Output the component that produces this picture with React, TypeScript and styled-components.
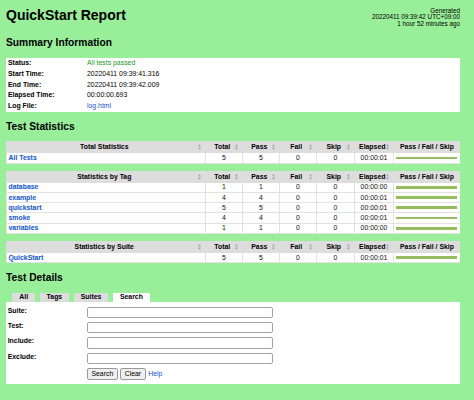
import React from 'react';
import styled, { createGlobalStyle } from 'styled-components';

const GlobalStyle = createGlobalStyle`
  html, body { margin: 0; padding: 0; background: #99ee99; }
  body { font-family: "Liberation Sans", Arial, sans-serif; color: #000; }
  * { box-sizing: border-box; }
`;

const Page = styled.div`
  width: 454px;
  margin-left: 6px;
  min-height: 400px;
  font-size: 6.9px;
  overflow: hidden;
`;

const Header = styled.header`
  display: flex;
  justify-content: space-between;
  align-items: flex-start;
  height: 27.7px;
`;

const Title = styled.h1`
  margin: 6.65px 0 0;
  font-size: 14px;
  line-height: 16px;
  font-weight: bold;
`;

const Generated = styled.div`
  margin-top: 8.2px;
  text-align: right;
  font-size: 6.3px;
  line-height: 6.2px;
`;

const H2 = styled.h2`
  margin: 9px 0 9.3px;
  font-size: 10.25px;
  line-height: 12px;
  font-weight: bold;
`;

const SummaryBox = styled.div`
  background: #fff;
  padding: 0.35px 0;
`;

const SummaryRow = styled.div`
  display: grid;
  grid-template-columns: 81px 1fr;
  height: 10.6px;
  line-height: 10.6px;
`;

const SummaryLabel = styled.div`
  font-weight: bold;
  padding-left: 2px;
`;

const SummaryValue = styled.div<{ $pass?: boolean }>`
  color: ${(p) => (p.$pass ? '#229922' : '#000')};
`;

const Link = styled.a<{ $bold?: boolean }>`
  color: #1155cc;
  text-decoration: none;
  font-weight: ${(p) => (p.$bold ? 'bold' : 'normal')};
`;

const StatsGroup = styled.div`
  display: flex;
  flex-direction: column;
  gap: 7.2px;
  margin: -0.5px 0;
`;

const StatTable = styled.table`
  width: 454px;
  table-layout: fixed;
  border-collapse: collapse;
  border-spacing: 0;
  background: #fff;
`;

const Col = styled.col<{ $w: number }>`
  width: ${(p) => p.$w}px;
`;

const HeadRow = styled.tr`
  height: 11px;
`;

const BodyRow = styled.tr`
  height: 10.2px;
`;

const Th = styled.th<{ $plain?: boolean }>`
  background: #dddddd;
  border: 1px solid #dddddd;
  padding: ${(p) => (p.$plain ? '0' : '0 0 0 4px')};
  font-weight: bold;
  line-height: 8px;
  text-align: center;
  white-space: nowrap;
  overflow: hidden;
`;

const ThInner = styled.div`
  display: grid;
  grid-template-columns: 1fr auto;
  align-items: center;
`;

const SortSvg = styled.svg`
  display: block;
  width: 3px;
  height: 6px;
  margin-right: 4.5px;
`;

const Td = styled.td<{ $left?: boolean }>`
  border: 1px solid #e2e2e2;
  padding: ${(p) => (p.$left ? '0 0 0 1.5px' : '0')};
  text-align: ${(p) => (p.$left ? 'left' : 'center')};
  line-height: 8px;
  white-space: nowrap;
  overflow: hidden;
  color: #111;
`;

const BarCell = styled.td`
  border: 1px solid #e2e2e2;
  padding: 0 2.6px 0 2px;
  vertical-align: middle;
`;

const BarTrack = styled.div`
  display: flex;
  height: 2.7px;
`;

const BarPass = styled.div`
  background: #97bd61;
  height: 100%;
`;

const Tabs = styled.div`
  display: flex;
  gap: 4.5px;
  padding-left: 6.3px;
`;

const Tab = styled.div<{ $active?: boolean }>`
  height: 8.7px;
  line-height: 8.7px;
  padding: 0 7px;
  background: ${(p) => (p.$active ? '#fff' : '#dddddd')};
  font-weight: bold;
`;

const DetailsBox = styled.div`
  background: #fff;
  padding: 5px 0 4.7px;
  display: flex;
  flex-direction: column;
  gap: 4.05px;
`;

const FormRow = styled.div`
  display: grid;
  grid-template-columns: 81px 186px;
  align-items: start;
`;

const FormLabel = styled.label`
  font-weight: bold;
  padding-left: 1.7px;
  line-height: 8px;
`;

const Input = styled.input`
  display: block;
  width: 186px;
  height: 11.3px;
  border: 1px solid #a4a4a4;
  border-radius: 2px;
  padding: 0 2px;
  font: inherit;
  background: #fff;
`;

const ButtonRow = styled.div`
  display: flex;
  align-items: center;
  gap: 2.7px;
`;

const Button = styled.button`
  height: 11.6px;
  padding: 0 3.4px;
  font: inherit;
  line-height: 9px;
  color: #000;
  background: #efefef;
  border: 1px solid #9a9a9a;
  border-radius: 2px;
`;

type Stat = { name: string; total: number; pass: number; fail: number; skip: number; elapsed: string };

const totals: Stat[] = [{ name: 'All Tests', total: 5, pass: 5, fail: 0, skip: 0, elapsed: '00:00:01' }];
const tags: Stat[] = [
  { name: 'database', total: 1, pass: 1, fail: 0, skip: 0, elapsed: '00:00:00' },
  { name: 'example', total: 4, pass: 4, fail: 0, skip: 0, elapsed: '00:00:01' },
  { name: 'quickstart', total: 5, pass: 5, fail: 0, skip: 0, elapsed: '00:00:01' },
  { name: 'smoke', total: 4, pass: 4, fail: 0, skip: 0, elapsed: '00:00:01' },
  { name: 'variables', total: 1, pass: 1, fail: 0, skip: 0, elapsed: '00:00:00' },
];
const suites: Stat[] = [{ name: 'QuickStart', total: 5, pass: 5, fail: 0, skip: 0, elapsed: '00:00:01' }];

const SortIcon = () => (
  <SortSvg viewBox="0 0 3 6">
    <polygon points="1.5,0 3,2.3 0,2.3" fill="#a8a8a8" />
    <polygon points="0,3.6 3,3.6 1.5,5.9" fill="#a8a8a8" />
  </SortSvg>
);

const SortHead = ({ label }: { label: string }) => (
  <Th>
    <ThInner>
      <span>{label}</span>
      <SortIcon />
    </ThInner>
  </Th>
);

const StatsTable = ({ title, rows }: { title: string; rows: Stat[] }) => (
  <StatTable>
    <colgroup>
      <Col $w={199} />
      <Col $w={37} />
      <Col $w={37} />
      <Col $w={37} />
      <Col $w={38} />
      <Col $w={39} />
      <Col $w={67} />
    </colgroup>
    <thead>
      <HeadRow>
        <SortHead label={title} />
        <SortHead label="Total" />
        <SortHead label="Pass" />
        <SortHead label="Fail" />
        <SortHead label="Skip" />
        <SortHead label="Elapsed" />
        <Th $plain>Pass / Fail / Skip</Th>
      </HeadRow>
    </thead>
    <tbody>
      {rows.map((r) => (
        <BodyRow key={r.name}>
          <Td $left>
            <Link $bold href="#">{r.name}</Link>
          </Td>
          <Td>{r.total}</Td>
          <Td>{r.pass}</Td>
          <Td>{r.fail}</Td>
          <Td>{r.skip}</Td>
          <Td>{r.elapsed}</Td>
          <BarCell>
            <BarTrack>
              <BarPass style={{ width: `${(r.pass / r.total) * 100}%` }} />
            </BarTrack>
          </BarCell>
        </BodyRow>
      ))}
    </tbody>
  </StatTable>
);

const summary: { label: string; value: React.ReactNode; pass?: boolean }[] = [
  { label: 'Status:', value: 'All tests passed', pass: true },
  { label: 'Start Time:', value: '20220411 09:39:41.316' },
  { label: 'End Time:', value: '20220411 09:39:42.009' },
  { label: 'Elapsed Time:', value: '00:00:00.693' },
  { label: 'Log File:', value: <Link href="#">log.html</Link> },
];

export default function App() {
  return (
    <>
      <GlobalStyle />
      <Page>
        <Header>
          <Title>QuickStart Report</Title>
          <Generated>
            Generated
            <br />
            20220411 09:39:42 UTC+09:00
            <br />1 hour 52 minutes ago
          </Generated>
        </Header>

        <H2>Summary Information</H2>
        <SummaryBox>
          {summary.map((s) => (
            <SummaryRow key={s.label}>
              <SummaryLabel>{s.label}</SummaryLabel>
              <SummaryValue $pass={s.pass}>{s.value}</SummaryValue>
            </SummaryRow>
          ))}
        </SummaryBox>

        <H2>Test Statistics</H2>
        <StatsGroup>
          <StatsTable title="Total Statistics" rows={totals} />
          <StatsTable title="Statistics by Tag" rows={tags} />
          <StatsTable title="Statistics by Suite" rows={suites} />
        </StatsGroup>

        <H2>Test Details</H2>
        <Tabs>
          <Tab>All</Tab>
          <Tab>Tags</Tab>
          <Tab>Suites</Tab>
          <Tab $active>Search</Tab>
        </Tabs>
        <DetailsBox>
          <FormRow>
            <FormLabel>Suite:</FormLabel>
            <Input type="text" />
          </FormRow>
          <FormRow>
            <FormLabel>Test:</FormLabel>
            <Input type="text" />
          </FormRow>
          <FormRow>
            <FormLabel>Include:</FormLabel>
            <Input type="text" />
          </FormRow>
          <FormRow>
            <FormLabel>Exclude:</FormLabel>
            <Input type="text" />
          </FormRow>
          <FormRow>
            <span />
            <ButtonRow>
              <Button type="button">Search</Button>
              <Button type="button">Clear</Button>
              <Link href="#">Help</Link>
            </ButtonRow>
          </FormRow>
        </DetailsBox>
      </Page>
    </>
  );
}
